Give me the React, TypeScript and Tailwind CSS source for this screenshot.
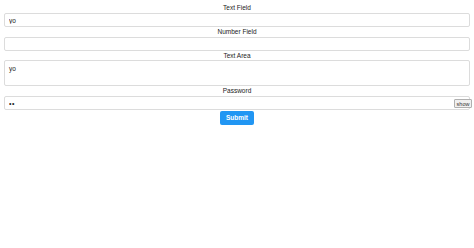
import React from "react";

export default function App() {
  return (
    <div className="w-[474px] h-[248px] bg-white text-[#222] text-[6.5px] font-['Liberation_Sans',Arial,sans-serif]">
      <form className="flex flex-col items-center pt-[4px] px-[4px]">
        <label className="leading-[7px] h-[7px]">Text Field</label>
        <input
          defaultValue="yo"
          className="mt-[2px] w-full h-[14px] border border-[#dcdcdc] rounded-[2px] px-[4px] text-[6.5px] outline-none font-['Liberation_Sans',Arial,sans-serif]"
        />
        <label className="mt-[1px] leading-[7px] h-[7px]">Number Field</label>
        <input
          type="text"
          className="mt-[2px] w-full h-[14px] border border-[#dcdcdc] rounded-[2px] px-[4px] text-[6.5px] outline-none font-['Liberation_Sans',Arial,sans-serif]"
        />
        <label className="mt-[1px] leading-[7px] h-[7px]">Text Area</label>
        <textarea
          defaultValue="yo"
          className="mt-[1px] w-full h-[26px] border border-[#dcdcdc] rounded-[2px] px-[4px] pt-[4px] text-[6.5px] leading-[7px] resize-none outline-none font-['Liberation_Sans',Arial,sans-serif]"
        />
        <label className="mt-[1px] leading-[7px] h-[7px]">Password</label>
        <div className="relative mt-[2px] w-full">
          <input
            type="password"
            defaultValue="yo"
            className="w-full h-[14px] border border-[#dcdcdc] rounded-[2px] px-[4px] text-[7px] tracking-[0.5px] outline-none font-['Liberation_Sans',Arial,sans-serif]"
          />
          <button
            type="button"
            className="absolute right-[-2px] top-[3px] w-[18px] h-[9px] bg-[#f0f0f0] border border-[#b0b0b0] rounded-[1px] text-[5.5px] leading-[6px] text-[#333] flex items-center justify-center font-['Liberation_Sans',Arial,sans-serif]"
          >
            show
          </button>
        </div>
        <button
          type="button"
          className="mt-[1px] w-[34px] h-[14px] bg-[#2196f3] rounded-[2px] text-white font-bold text-[6.5px] flex items-center justify-center font-['Liberation_Sans',Arial,sans-serif]"
        >
          Submit
        </button>
      </form>
    </div>
  );
}
